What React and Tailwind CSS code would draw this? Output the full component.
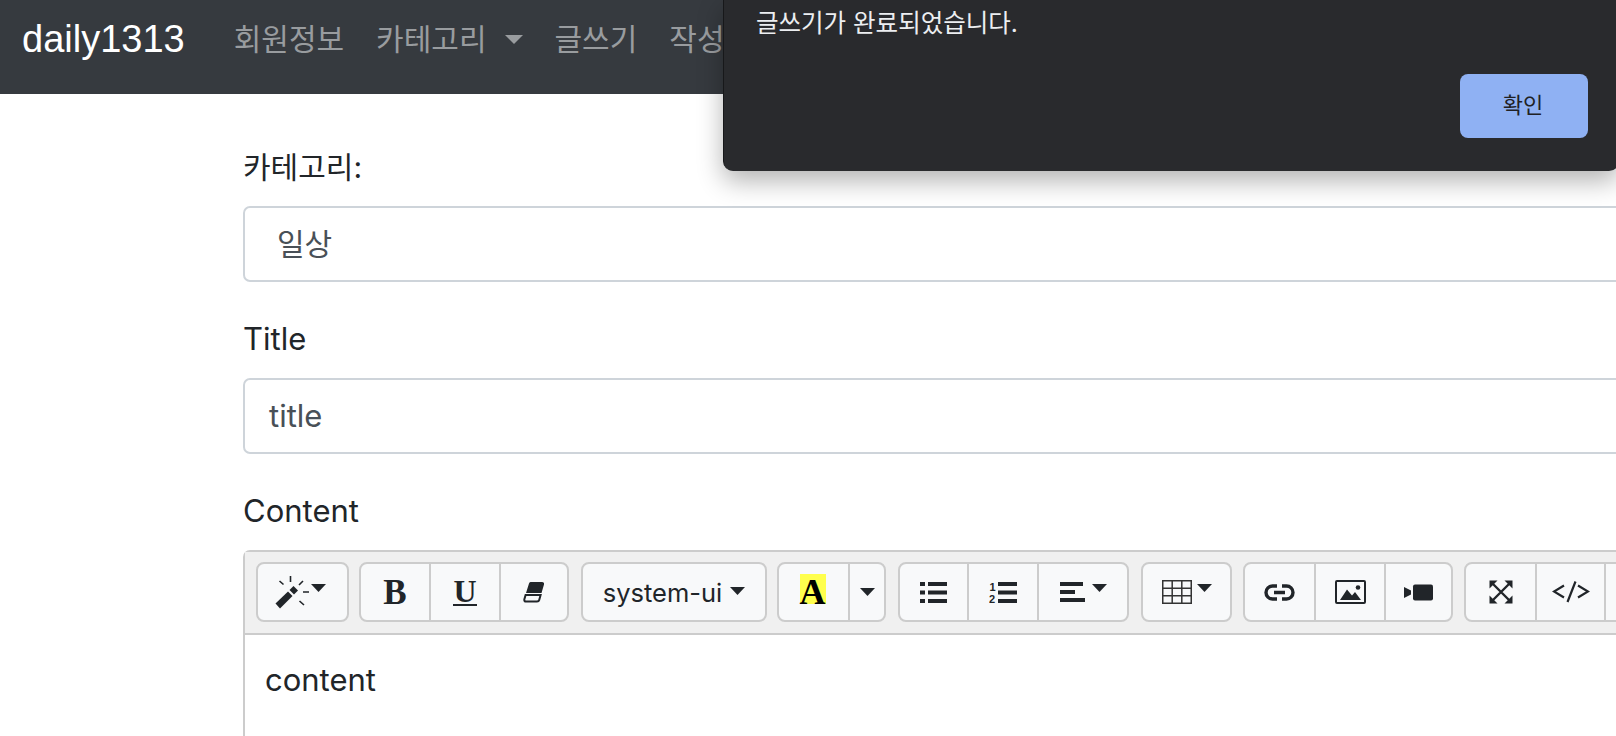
import React from "react";

const sans = "font-['Inter','Noto_Sans_CJK_KR',sans-serif]";

const Caret = ({ className = "" }) => (
  <svg width="15" height="8" viewBox="0 0 15 8" className={className}>
    <path d="M0 0h15L7.5 8z" fill="#212529" />
  </svg>
);

const Cell = ({ className = "", children }) => (
  <div
    className={`h-full flex items-center justify-center shrink-0 border-l-2 border-[#cccccc] first:border-l-0 ${className}`}
  >
    {children}
  </div>
);

const Group = ({ className = "", children }) => (
  <div
    className={`flex h-[60px] shrink-0 overflow-hidden rounded-[8px] border-2 border-[#cccccc] bg-[#f8f9fa] ${className}`}
  >
    {children}
  </div>
);

const Wand = () => (
  <svg width="35" height="34" viewBox="0 0 35 34" fill="none" stroke="#212529" strokeWidth="1.6">
    <path d="M0.5 28.5L13 16.5l4.5 4.5L5 33.5z" fill="#212529" stroke="none" />
    <path d="M14.5 15l4-4 4.5 4.5-4 4z" fill="#212529" stroke="none" />
    <path d="M15.5 1v6M4.5 6l4 3.5M28 6l-4 4M28 17h6M24.5 26l4.5 4" />
  </svg>
);

const Eraser = () => (
  <svg width="22" height="22" viewBox="0 0 22 22" fill="none">
    <path d="M7.5 1H19q2.5 0 2 2.5L18.5 12H3L6 2.5Q6.3 1 7.5 1z" fill="#212529" />
    <path d="M2.6 14H17.6L16.2 19Q15.8 20.5 14 20.5H3Q1 20.5 1.3 18.5z" stroke="#212529" strokeWidth="2" />
  </svg>
);

const UlIcon = () => (
  <svg width="27" height="21" viewBox="0 0 27 21" fill="#212529">
    <rect x="0" y="0" width="5" height="4" />
    <rect x="8" y="0" width="19" height="4" />
    <rect x="0" y="8.5" width="5" height="4" />
    <rect x="8" y="8.5" width="19" height="4" />
    <rect x="0" y="17" width="5" height="4" />
    <rect x="8" y="17" width="19" height="4" />
  </svg>
);

const OlIcon = () => (
  <svg width="28" height="23" viewBox="0 0 28 23" fill="#212529">
    <text x="0.5" y="10" fontSize="11" fontWeight="700" fontFamily="Liberation Sans, sans-serif">1</text>
    <text x="0" y="22" fontSize="11" fontWeight="700" fontFamily="Liberation Sans, sans-serif">2</text>
    <rect x="9" y="1" width="19" height="4" />
    <rect x="9" y="9.5" width="19" height="4" />
    <rect x="9" y="18" width="19" height="4" />
  </svg>
);

const AlignIcon = () => (
  <svg width="25" height="20" viewBox="0 0 25 20" fill="#212529">
    <rect x="0" y="0" width="23" height="4" />
    <rect x="0" y="8" width="15" height="4" />
    <rect x="0" y="16" width="25" height="4" />
  </svg>
);

const TableIcon = () => (
  <svg width="30" height="24" viewBox="0 0 30 24" fill="none" stroke="#333" strokeWidth="1.5">
    <rect x="0.75" y="0.75" width="28.5" height="22.5" />
    <path d="M10.2 1v22M19.8 1v22M1 8.2h28M1 15.8h28" />
  </svg>
);

const LinkIcon = () => (
  <svg width="31" height="17" viewBox="0 0 31 17" fill="none" stroke="#212529" strokeWidth="3.4">
    <path d="M13 2H8.5a6.5 6.5 0 0 0 0 13H13" />
    <path d="M18 2h4.5a6.5 6.5 0 0 1 0 13H18" />
    <path d="M10 8.5h11" />
  </svg>
);

const PictureIcon = () => (
  <svg width="31" height="24" viewBox="0 0 31 24" fill="none">
    <rect x="1" y="1" width="29" height="22" rx="1" stroke="#212529" strokeWidth="2" />
    <circle cx="23" cy="7.5" r="2.3" fill="#212529" />
    <path d="M5 20L12 9.5 17 15.5 20 12 26 20z" fill="#212529" />
  </svg>
);

const VideoIcon = () => (
  <svg width="29" height="17" viewBox="0 0 29 17" fill="#212529">
    <path d="M0 3l7 3.5v4L0 14z" />
    <rect x="9" y="0.5" width="20" height="16" rx="2" />
  </svg>
);

const ExpandIcon = () => (
  <svg width="24" height="24" viewBox="0 0 24 24" fill="#212529">
    <path d="M0.5 0.5h8L0.5 8.5zM23.5 0.5v8l-8-8zM0.5 23.5v-8l8 8zM23.5 23.5h-8l8-8z" />
    <path d="M4 4L20 20M20 4L4 20" stroke="#212529" strokeWidth="2.4" fill="none" />
  </svg>
);

const CodeIcon = () => (
  <svg width="38" height="22" viewBox="0 0 38 22" fill="none" stroke="#212529" strokeWidth="2.2">
    <path d="M12 4.5L2 10.5l10 6M26 4.5l10 6-10 6M23.5 0.5L15.5 21" />
  </svg>
);

const App = () => {
  return (
    <div className={`relative w-[1616px] h-[736px] overflow-hidden bg-white text-[#212529] ${sans}`}>
      {/* navbar */}
      <nav className="h-[94px] bg-[#363a3f] flex items-start pl-[22px] pt-[12px] whitespace-nowrap">
        <span className="text-white text-[38px] leading-[54px] font-['Liberation_Sans','Noto_Sans_CJK_KR',sans-serif]">
          daily1313
        </span>
        <div className="flex items-center h-[54px] ml-[49px] text-[30px] text-[#999c9f]">
          <span>회원정보</span>
          <span className="ml-[32px]">카테고리</span>
          <svg width="18" height="9" viewBox="0 0 18 9" className="ml-[18px]">
            <path d="M0 0h18L9 9z" fill="#999c9f" />
          </svg>
          <span className="ml-[32px]">글쓰기</span>
          <span className="ml-[32px]">작성</span>
        </div>
      </nav>

      {/* form */}
      <main className="pl-[243px] pt-[50px] w-[1800px]">
        <label className="block text-[30px] leading-[46px] mb-[16px]">카테고리:</label>
        <div className="h-[76px] mb-[34px] border-2 border-[#ced4da] rounded-[7px] flex items-center pl-[32px] text-[30px] text-[#495057]">
          일상
        </div>

        <label className="block text-[31px] leading-[46px] mb-[16px]">Title</label>
        <div className="h-[76px] mb-[34px] border-2 border-[#ced4da] rounded-[7px] flex items-center pl-[24px] text-[31px] text-[#495057]">
          title
        </div>

        <label className="block text-[31px] leading-[46px] mb-[16px]">Content</label>
        <div className="border-2 border-[#cccccc] rounded-t-[7px] h-[300px]">
          <div className="h-[83px] bg-[#f0f0f0] border-b-2 border-[#cccccc] flex pl-[11px] pt-[10px]">
            <Group>
              <Cell className="w-[89px] gap-[1px] pr-[4px]">
                <Wand />
                <Caret className="-mt-[8px]" />
              </Cell>
            </Group>
            <Group className="ml-[10px]">
              <Cell className="w-[68px]">
                <span className="font-['Liberation_Serif',serif] font-bold text-[35px] leading-none">B</span>
              </Cell>
              <Cell className="w-[70px]">
                <span className="font-['Liberation_Serif',serif] font-bold text-[32px] leading-[26px] border-b-2 border-[#212529]">U</span>
              </Cell>
              <Cell className="w-[68px]">
                <Eraser />
              </Cell>
            </Group>
            <Group className="ml-[12px]">
              <Cell className="w-[182px] gap-[8px] text-[25.5px] pt-[3px]">
                <span>system-ui</span>
                <Caret className="-mt-[6px]" />
              </Cell>
            </Group>
            <Group className="ml-[10px]">
              <Cell className="w-[69px] pr-[2px]">
                <span className="w-[26px] h-[30px] -mt-[6px] bg-[#ffff4d] flex items-start justify-center font-['Liberation_Serif',serif] font-bold text-[36px] leading-[36px] text-black">
                  A
                </span>
              </Cell>
              <Cell className="w-[36px]">
                <Caret />
              </Cell>
            </Group>
            <Group className="ml-[12px]">
              <Cell className="w-[67px]">
                <UlIcon />
              </Cell>
              <Cell className="w-[70px]">
                <OlIcon />
              </Cell>
              <Cell className="w-[90px] gap-[7px]">
                <AlignIcon />
                <Caret className="-mt-[8px]" />
              </Cell>
            </Group>
            <Group className="ml-[12px]">
              <Cell className="w-[87px] gap-[5px]">
                <TableIcon />
                <Caret className="-mt-[8px]" />
              </Cell>
            </Group>
            <Group className="ml-[11px]">
              <Cell className="w-[69px]">
                <LinkIcon />
              </Cell>
              <Cell className="w-[70px]">
                <PictureIcon />
              </Cell>
              <Cell className="w-[67px]">
                <VideoIcon />
              </Cell>
            </Group>
            <Group className="ml-[11px]">
              <Cell className="w-[69px]">
                <ExpandIcon />
              </Cell>
              <Cell className="w-[69px]">
                <CodeIcon />
              </Cell>
              <Cell className="w-[70px]" />
            </Group>
          </div>
          <div className="pl-[20px] pt-[22px] text-[31px] leading-[46px]">content</div>
        </div>
      </main>

      {/* alert dialog */}
      <div className="absolute left-[723px] top-0 w-[896px] h-[171px] bg-[#292a2d] border-l border-[#17181a] rounded-b-[10px] shadow-[0_10px_26px_rgba(0,0,0,0.3)]">
        <p className="absolute left-[32px] top-[6px] text-[24.5px] leading-[34px] text-[#eceef1] whitespace-nowrap">
          글쓰기가 완료되었습니다.
        </p>
        <button className="absolute left-[736px] top-[74px] w-[128px] h-[64px] rounded-[8px] bg-[#8fb1f3] text-[22px] text-[#202124] pr-[2px] pb-[2px]">
          확인
        </button>
      </div>
    </div>
  );
};

export default App;
